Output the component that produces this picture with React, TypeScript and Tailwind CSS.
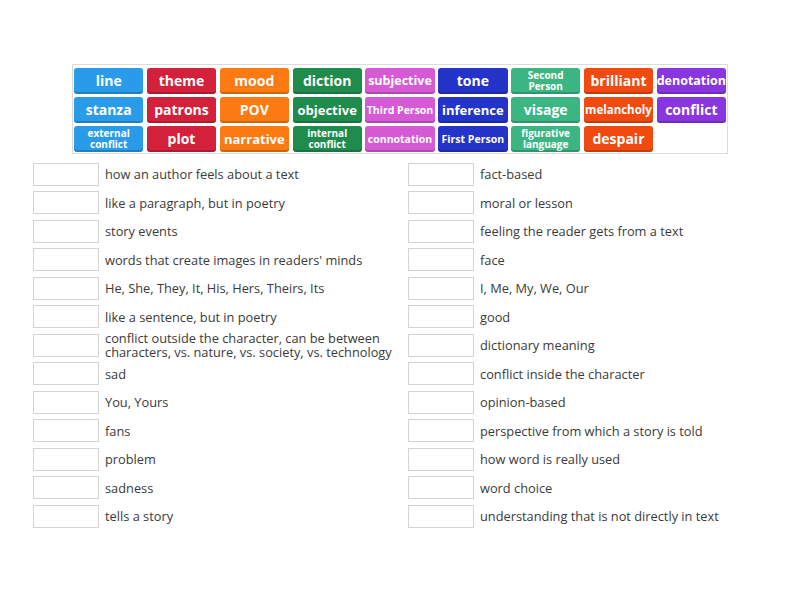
import React from "react";

type Tile = { label: string; two?: boolean; size?: string };

const colors = [
  "bg-[#2a9be8]",
  "bg-[#d3203b]",
  "bg-[#fb7a12]",
  "bg-[#1f8b4d]",
  "bg-[#d65ad6]",
  "bg-[#2434c8]",
  "bg-[#3bb683]",
  "bg-[#f04a10]",
  "bg-[#8a36e0]",
];

// rows of the word bank, column index picks the colour
const bank: (Tile | null)[][] = [
  [
    { label: "line" },
    { label: "theme" },
    { label: "mood" },
    { label: "diction" },
    { label: "subjective", size: "text-[12.5px]" },
    { label: "tone" },
    { label: "Second Person", two: true },
    { label: "brilliant" },
    { label: "denotation", size: "text-[12.5px]" },
  ],
  [
    { label: "stanza" },
    { label: "patrons" },
    { label: "POV" },
    { label: "objective", size: "text-[13px]" },
    { label: "Third Person", size: "text-[10.5px]" },
    { label: "inference", size: "text-[13px]" },
    { label: "visage" },
    { label: "melancholy", size: "text-[11.5px]" },
    { label: "conflict" },
  ],
  [
    { label: "external conflict", two: true },
    { label: "plot" },
    { label: "narrative", size: "text-[13px]" },
    { label: "internal conflict", two: true },
    { label: "connotation", size: "text-[10.5px]" },
    { label: "First Person", size: "text-[10.5px]" },
    { label: "figurative language", two: true },
    { label: "despair" },
    null,
  ],
];

const left = [
  "how an author feels about a text",
  "like a paragraph, but in poetry",
  "story events",
  "words that create images in readers' minds",
  "He, She, They, It, His, Hers, Theirs, Its",
  "like a sentence, but in poetry",
  "conflict outside the character, can be between characters, vs. nature, vs. society, vs. technology",
  "sad",
  "You, Yours",
  "fans",
  "problem",
  "sadness",
  "tells a story",
];

const right = [
  "fact-based",
  "moral or lesson",
  "feeling the reader gets from a text",
  "face",
  "I, Me, My, We, Our",
  "good",
  "dictionary meaning",
  "conflict inside the character",
  "opinion-based",
  "perspective from which a story is told",
  "how word is really used",
  "word choice",
  "understanding that is not directly in text",
];

const AnswerRow = ({ text }: { text: string }) => (
  <div className="h-[28.5px] flex items-center gap-[6px]">
    <div className="w-[66px] h-[23px] shrink-0 border border-[#d4d4d4] bg-white" />
    <span className="text-[12.8px] leading-[14px] text-[#3a3a3a]">{text}</span>
  </div>
);

export default function App() {
  return (
    <div className="w-[800px] h-[600px] bg-white font-['Open_Sans',sans-serif] pt-[64px]">
      {/* word bank */}
      <div className="ml-[72px] w-[656px] border border-[#dcdcdc] px-[1px] pt-[3px] pb-[1px]">
        <div className="grid grid-cols-9 gap-x-[3.5px] gap-y-[3px]">
          {bank.flatMap((row, r) =>
            row.map((t, c) =>
              t ? (
                <div
                  key={`${r}-${c}`}
                  className={`${colors[c]} h-[26px] rounded-[3px] flex items-center justify-center text-center text-white font-bold shadow-[inset_0_-2px_0_rgba(0,0,0,0.18)] ${
                    t.two
                      ? "text-[10px] leading-[11px]"
                      : `${t.size ?? "text-[14px]"} leading-none whitespace-nowrap`
                  }`}
                >
                  <span className={t.two ? "px-1" : ""}>{t.label}</span>
                </div>
              ) : (
                <div key={`${r}-${c}`} />
              )
            )
          )}
        </div>
      </div>

      {/* definitions */}
      <div className="mt-[6px] ml-[33px] flex">
        <div className="w-[375px] flex flex-col">
          {left.map((t) => (
            <AnswerRow key={t} text={t} />
          ))}
        </div>
        <div className="w-[375px] flex flex-col">
          {right.map((t) => (
            <AnswerRow key={t} text={t} />
          ))}
        </div>
      </div>
    </div>
  );
}
